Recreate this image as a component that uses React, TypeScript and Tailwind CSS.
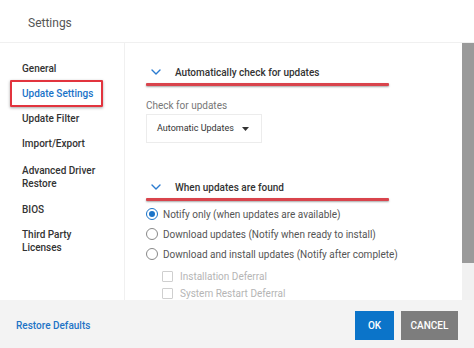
import React from "react";

const font = { fontFamily: "Roboto, 'Liberation Sans', sans-serif" };

function Chevron() {
  return (
    <svg width="10" height="6" viewBox="0 0 10 6" className="shrink-0">
      <path d="M1 1 L5 5 L9 1" fill="none" stroke="#2b7bd0" strokeWidth="1.4" strokeLinecap="round" strokeLinejoin="round" />
    </svg>
  );
}

function SectionHeading({ title }: { title: string }) {
  return (
    <div>
      <div className="flex items-center h-[20px] pl-[5px]">
        <Chevron />
        <span className="ml-[14px] text-[10px] font-medium text-[#333]">{title}</span>
      </div>
      <div className="mt-[1px] h-[3px] w-[243px] bg-[#d9444c] shadow-[0_1px_2px_rgba(0,0,0,0.35)] rounded-[1px]" />
    </div>
  );
}

function Radio({ checked, label }: { checked?: boolean; label: string }) {
  return (
    <div className="flex items-center h-[20px]">
      <span
        className={
          checked
            ? "w-[12px] h-[12px] rounded-full border border-[#1a73c8] flex items-center justify-center"
            : "w-[12px] h-[12px] rounded-full border border-[#888]"
        }
      >
        {checked && <span className="w-[6px] h-[6px] rounded-full bg-[#1a73c8]" />}
      </span>
      <span className="ml-[5px] text-[10px] text-[#555]">{label}</span>
    </div>
  );
}

function Check({ label }: { label: string }) {
  return (
    <div className="flex items-center h-[17px] pl-[16px]">
      <span className="w-[11px] h-[11px] border border-[#cfcfcf] rounded-[1px]" />
      <span className="ml-[7px] text-[10px] text-[#b5b5b5]">{label}</span>
    </div>
  );
}

export default function App() {
  const nav = [
    "General",
    "Update Settings",
    "Update Filter",
    "Import/Export",
    "Advanced Driver Restore",
    "BIOS",
    "Third Party Licenses",
  ];
  return (
    <div className="w-[474px] h-[348px] bg-white flex flex-col overflow-hidden" style={font}>
      <div className="h-[43px] shrink-0 flex items-center pl-[28px] pt-[4px] border-b border-[#f0f0f0]">
        <span className="text-[12px] text-[#555]">Settings</span>
      </div>
      <div className="flex flex-1 min-h-0">
        <div className="w-[125px] shrink-0 border-r border-[#f0f0f0] pt-[13px] pl-[22px]">
          {nav.map((n) => (
            <div
              key={n}
              className={
                n === "Advanced Driver Restore"
                  ? "relative pt-[8px] pb-[7px] w-[85px]"
                  : "relative py-[6px] w-[85px]"
              }
            >
              <div
                className={
                  n === "Update Settings"
                    ? "text-[10px] leading-[13px] font-medium text-[#1a73c8] whitespace-nowrap"
                    : "text-[10px] leading-[13px] font-medium text-[#333]"
                }
              >
                {n}
              </div>
              {n === "Update Settings" && (
                <div className="absolute left-[-12px] top-[-1px] w-[93px] h-[27px] border-2 border-[#e2343e] rounded-[1px] shadow-[0_1px_3px_rgba(0,0,0,0.35)]" />
              )}
            </div>
          ))}
        </div>
        <div className="flex-1 pl-[21px] pt-[19px]">
          <SectionHeading title="Automatically check for updates" />
          <div className="mt-[13px] text-[10px] leading-[14px] text-[#777]">Check for updates</div>
          <div className="mt-[1px] w-[116px] h-[29px] border border-[#ececec] flex items-center pl-[10px] whitespace-nowrap">
            <span className="text-[9px] text-[#333]">Automatic Updates</span>
            <svg width="7" height="4" viewBox="0 0 7 4" className="ml-[8px]">
              <path d="M0 0 L7 0 L3.5 4 Z" fill="#333" />
            </svg>
          </div>
          <div className="mt-[34px]">
            <SectionHeading title="When updates are found" />
          </div>
          <div className="mt-[3px]">
            <Radio checked label="Notify only (when updates are available)" />
            <Radio label="Download updates (Notify when ready to install)" />
            <Radio label="Download and install updates (Notify after complete)" />
          </div>
          <div className="mt-[4px]">
            <Check label="Installation Deferral" />
            <Check label="System Restart Deferral" />
          </div>
        </div>
        <div className="w-[12px] shrink-0 flex flex-col bg-[#f1f1f1]">
          <div className="h-[220px] bg-[#9a9a9a]" />
        </div>
      </div>
      <div className="h-[48px] shrink-0 bg-[#f3f3f3] flex items-center pl-[16px] pr-[16px] pt-[2px]">
        <span className="text-[10px] font-medium text-[#1f74c6]">Restore Defaults</span>
        <div className="ml-auto flex gap-[7px]">
          <div className="w-[39px] h-[29px] bg-[#0b74c9] flex items-center justify-center text-[10px] font-medium text-white">OK</div>
          <div className="w-[57px] h-[29px] bg-[#7d7d7d] flex items-center justify-center text-[10px] font-medium text-white">CANCEL</div>
        </div>
      </div>
    </div>
  );
}
